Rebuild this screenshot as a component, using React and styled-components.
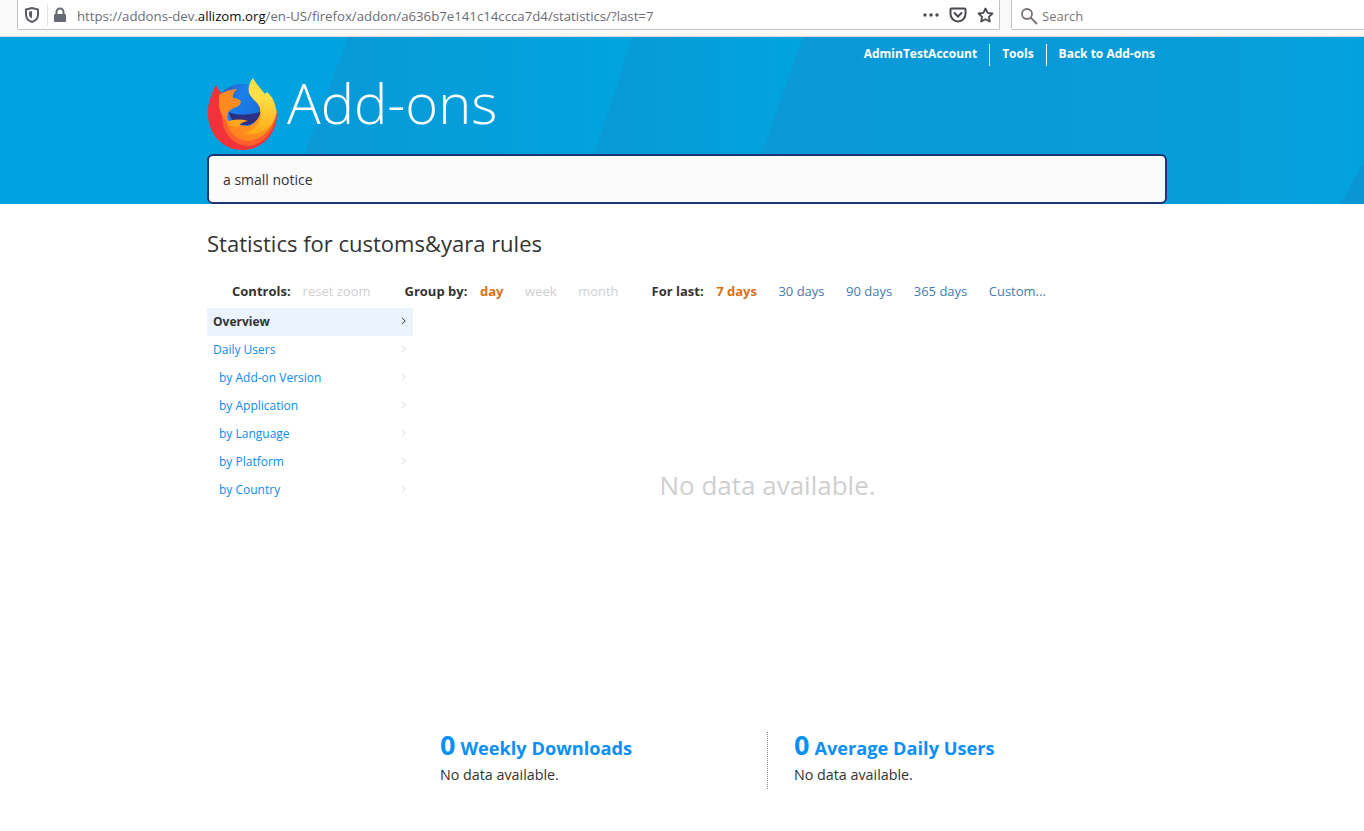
import React from 'react';
import styled, { createGlobalStyle } from 'styled-components';

const Global = createGlobalStyle`
  html, body { margin: 0; padding: 0; background: #fff; }
  body { font-family: "Open Sans", "Liberation Sans", sans-serif; overflow: hidden; }
  * { box-sizing: border-box; }
`;

const Page = styled.div`
  width: 1364px;
  height: 831px;
  overflow: hidden;
  display: flex;
  flex-direction: column;
`;

const Chrome = styled.div`
  height: 37px;
  flex: none;
  background: #f9f9fa;
  border-bottom: 1px solid #d4d4d4;
  padding-left: 17px;
  display: flex;
  gap: 11px;
  align-items: flex-start;
  overflow: hidden;
`;

const UrlBox = styled.div`
  width: 983px;
  height: 30px;
  flex: none;
  background: #fff;
  border: 1px solid #c4c4c4;
  border-top: none;
  border-radius: 0 0 2px 2px;
  display: flex;
  align-items: center;
  padding: 0 5px 0 6px;
  font-family: "Open Sans", sans-serif;
  font-size: 13.23px;
  color: #6c6c74;
`;

const Sep = styled.span`
  width: 1px;
  height: 22px;
  background: #e4e4e6;
  margin: 0 5px 0 7px;
`;

const UrlText = styled.span`
  margin-left: 10px;
  padding-top: 2px;
  flex: 1;
  white-space: nowrap;
  b { font-weight: 400; color: #0c0c0d; }
`;

const UrlActions = styled.div`
  display: flex;
  align-items: center;
  gap: 10px;
  color: #4a4a4f;
`;

const SearchBox = styled.div`
  width: 360px;
  height: 30px;
  flex: none;
  background: #fff;
  border: 1px solid #c4c4c4;
  border-top: none;
  border-radius: 0 0 2px 2px;
  display: flex;
  align-items: center;
  gap: 4px;
  padding: 2px 0 0 8px;
  font-size: 13px;
  color: #77777c;
`;

const Header = styled.header`
  position: relative;
  height: 167px;
  flex: none;
  background: #00a3df;
  overflow: hidden;
`;

const HeaderArt = styled.svg`
  position: absolute;
  inset: 0;
  width: 100%;
  height: 100%;
`;

const HeaderInner = styled.div`
  position: relative;
  width: 960px;
  height: 100%;
  margin-left: 207px;
  display: flex;
  flex-direction: column;
`;

const TopNav = styled.nav`
  display: flex;
  justify-content: flex-end;
  padding: 7px 12px 0 0;
  height: 29px;
`;

const TopLink = styled.a`
  font-size: 12px;
  font-weight: 700;
  line-height: 20px;
  color: #fff;
  padding: 0 12px;
  border-left: ${p => (p.$first ? 'none' : '1px solid #fff')};
  &:last-child { padding-right: 0; }
`;

const Brand = styled.div`
  display: flex;
  align-items: flex-start;
  height: 88px;
`;

const BrandLogo = styled.svg`
  width: 78px;
  height: 78px;
  margin: 8px 0 0 -3px;
  flex: none;
`;

const BrandName = styled.h1`
  margin: 0 0 0 5px;
  font-size: 56px;
  font-weight: 300;
  line-height: 72px;
  color: #fff;
`;

const Notice = styled.div`
  height: 50px;
  background: #fbfbfb;
  border: 2px solid #1d3572;
  border-radius: 6px;
  padding: 0 14px;
  display: flex;
  align-items: center;
  font-size: 14px;
  color: #333;
`;

const Main = styled.main`
  width: 960px;
  margin-left: 207px;
  flex: 1;
  display: flex;
  flex-direction: column;
`;

const Title = styled.h2`
  margin: 24px 0 0;
  font-size: 22px;
  font-weight: 400;
  line-height: 30px;
  color: #333;
`;

const Controls = styled.div`
  display: flex;
  align-items: center;
  height: 20px;
  margin-top: 23px;
  padding-left: 25px;
  font-size: 13px;
  white-space: nowrap;
`;

const Group = styled.div`
  display: flex;
  gap: ${p => p.$gap || 21}px;
  margin-right: ${p => p.$mr || 0}px;
  align-items: center;
`;

const CtlLabel = styled.strong`
  font-weight: 700;
  color: #333;
  margin-right: -9px;
`;

const Ctl = styled.a`
  color: ${p => (p.$state === 'active' ? '#d9701a' : p.$state === 'off' ? '#cfcfcf' : '#447bb4')};
  font-weight: ${p => (p.$state === 'active' ? 700 : 400)};
`;

const Columns = styled.div`
  display: grid;
  grid-template-columns: 206px 1fr;
  margin-top: 7px;
`;

const SideNav = styled.ul`
  list-style: none;
  margin: 0;
  padding: 0;
`;

const SideRow = styled.li`
  height: 28px;
  display: flex;
  align-items: center;
  justify-content: space-between;
  padding: 0 7px 2px ${p => (p.$sub ? 12 : 6)}px;
  font-size: 12px;
  font-weight: ${p => (p.$active ? 700 : 400)};
  color: ${p => (p.$active ? '#333' : '#0a8cf0')};
  background: ${p => (p.$active ? '#ebf3fd' : 'transparent')};
`;

const Chart = styled.div`
  height: 354px;
  display: flex;
  align-items: center;
  justify-content: center;
  padding: 0 45px 0 0;
  font-size: 26px;
  color: #cfcfcf;
`;

const Stats = styled.section`
  margin: 70px 0 0 233px;
  display: flex;
  height: 57px;
`;

const Stat = styled.div`
  width: ${p => p.$w}px;
  padding-left: ${p => p.$pl || 0}px;
  border-right: ${p => (p.$rule ? '1px dotted #888' : 'none')};
`;

const StatHead = styled.div`
  display: flex;
  align-items: baseline;
  gap: 5px;
  height: 30px;
  color: #0a90f5;
  font-weight: 700;
  font-size: 18.2px;
  line-height: 25px;
`;

const StatNum = styled.span`
  font-size: 27px;
  line-height: 25px;
`;

const StatNote = styled.div`
  font-size: 14.3px;
  line-height: 20px;
  margin-top: 3px;
  color: #333;
`;

const Chevron = ({ dark }) => (
  <svg width="5" height="8" viewBox="0 0 5 8" fill="none" stroke={dark ? '#333' : '#dcdcdc'} strokeWidth="1">
    <path d="M1 .8 4.200 4 1 7.200" />
  </svg>
);

const ShieldIcon = () => (
  <svg width="16" height="16" viewBox="0 0 16 16">
    <path d="M8 1 2 2.600v5.200C2 11.600 5 14 8 15c3-1 6-3.400 6-7.200V2.600z" fill="none" stroke="#5b5b66" strokeWidth="2" />
    <path d="M8 4 5 4.800v3c0 1.800 1.400 3 3 3.600z" fill="#5b5b66" />
  </svg>
);

const LockIcon = () => (
  <svg width="14" height="16" viewBox="0 0 14 16">
    <path d="M3.500 7V5a3.500 3.500 0 0 1 7 0v2" fill="none" stroke="#666a75" strokeWidth="2" />
    <rect x="1" y="7" width="12" height="8" rx="1" fill="#666a75" />
  </svg>
);

const PocketIcon = () => (
  <svg width="18" height="16" viewBox="0 0 18 16" fill="none" stroke="#4a4a4f" strokeWidth="2">
    <path d="M2.500 1.500h13a1 1 0 0 1 1 1V7a7.500 7.500 0 0 1-15 0V2.500a1 1 0 0 1 1-1z" />
    <path d="M5.500 6 9 9.500 12.500 6" strokeLinecap="round" />
  </svg>
);

const StarIcon = () => (
  <svg width="17" height="16" viewBox="0 0 17 16" fill="none" stroke="#4a4a4f" strokeWidth="1.800" strokeLinejoin="round">
    <path d="M8.500 1.500l2.100 4.400 4.800.6-3.500 3.300.9 4.700-4.300-2.300-4.300 2.300.9-4.700-3.500-3.300 4.800-.6z" />
  </svg>
);

const DotsIcon = () => (
  <svg width="16" height="4" viewBox="0 0 16 4" fill="#4a4a4f">
    <circle cx="2" cy="2" r="1.700" /><circle cx="8" cy="2" r="1.700" /><circle cx="14" cy="2" r="1.700" />
  </svg>
);

const SearchIcon = () => (
  <svg width="18" height="18" viewBox="0 0 18 18" fill="none" stroke="#7a7078" strokeWidth="1.800">
    <circle cx="7" cy="7" r="5" />
    <path d="M11 11l5.500 5.500" strokeLinecap="round" />
  </svg>
);

const FirefoxLogo = () => (
  <BrandLogo viewBox="0 0 78 78">
    <defs>
      <linearGradient id="ffOrange" x1="0" y1="1" x2="1" y2="0">
        <stop offset="0" stopColor="#ff7a1f" />
        <stop offset="1" stopColor="#ffb21a" />
      </linearGradient>
      <linearGradient id="ffTail" x1="0" y1="0" x2="0" y2="1">
        <stop offset="0.35" stopColor="#ffdf45" />
        <stop offset="1" stopColor="#ffa915" />
      </linearGradient>
      <linearGradient id="ffGlobe" x1="0" y1="0" x2="1" y2="0.6">
        <stop offset="0" stopColor="#2f56c4" />
        <stop offset="0.5" stopColor="#1a80ea" />
        <stop offset="1" stopColor="#1a70dc" />
      </linearGradient>
    </defs>
    <path d="M12 11 C6 22 3 33 4 43 C6 63 21 76 38 76 C58 76 73 60 73 40 L50 22 L22 22 C18 20 15 17 12 11 Z" fill="#f1323a" />
    <path d="M18 40 C17 56 28 72 44 72 C59 71 71 58 73 38 L55 30 L30 28 Z" fill="#ff5f2b" />
    <path d="M22 46 C24 58 33 67 44 67 C58 66 70 54 73 36 L55 30 L30 34 Z" fill="url(#ffOrange)" />
    <path d="M16 22 C20 14 31 9 42 10 C50 11 55 21 56 32 C57 42 52 50 44 52 L26 50 L20 36 Z" fill="url(#ffGlobe)" />
    <path d="M25 38 C33 42 45 41 56.500 38 C55 46 49 51 40 51 C32 51 26 46 25 38 Z" fill="#2c2f83" />
    <path d="M15 21 C21 17 27 15 33 15 C30 18 28 21 29 24 C32 24 37 26 37 28 C36 31 34 33 32 33 C28 35 25 36 24 39 C23 43 23 46 24 49 C19 45 16 38 15 32 Z" fill="#ff8a1f" />
    <path d="M23 48 C30 45 37 45 44 47 C38 48 36 50 34 53 C30 53 26 51 23 48 Z" fill="#ffa61d" />
    <path d="M49 4 C45 9 44 14 45 19 C48 26 56 29 57 38 C58 49 50 57 39 59 C53 63 66 56 71 44 C74 34 70 24 63 18 L61 20 C57 15 52 10 49 4 Z" fill="url(#ffTail)" />
  </BrandLogo>
);

const sections = [
  { label: 'Overview', active: true },
  { label: 'Daily Users' },
  { label: 'by Add-on Version', sub: true },
  { label: 'by Application', sub: true },
  { label: 'by Language', sub: true },
  { label: 'by Platform', sub: true },
  { label: 'by Country', sub: true },
];

export default function App() {
  return (
    <Page>
      <Global />
      <Chrome>
        <UrlBox>
          <ShieldIcon />
          <Sep />
          <LockIcon />
          <UrlText>
            https://addons-dev.<b>allizom.org</b>/en-US/firefox/addon/a636b7e141c14ccca7d4/statistics/?last=7
          </UrlText>
          <UrlActions>
            <DotsIcon />
            <PocketIcon />
            <StarIcon />
          </UrlActions>
        </UrlBox>
        <SearchBox>
          <SearchIcon />
          Search
        </SearchBox>
      </Chrome>
      <Header>
        <HeaderArt viewBox="0 0 1364 167" preserveAspectRatio="none">
          <defs>
            <linearGradient id="band" x1="0" y1="0" x2="1" y2="0">
              <stop offset="0" stopColor="#0a98d6" />
              <stop offset="1" stopColor="#00a4df" />
            </linearGradient>
            <linearGradient id="bandWide" x1="0" y1="0" x2="1" y2="0">
              <stop offset="0" stopColor="#0a99d7" />
              <stop offset="0.7" stopColor="#089cd9" />
              <stop offset="1" stopColor="#03a2de" />
            </linearGradient>
          </defs>
          <polygon points="348,0 632,0 578,167 286,167" fill="url(#band)" />
          <polygon points="632,0 803,0 743,167 578,167" fill="url(#band)" />
          <polygon points="803,0 1364,0 1364,167 743,167" fill="url(#bandWide)" />
          <polygon points="1364,125 1364,167 1340,167" fill="#0a96d4" />
        </HeaderArt>
        <HeaderInner>
          <TopNav>
            <TopLink $first>AdminTestAccount</TopLink>
            <TopLink>Tools</TopLink>
            <TopLink>Back to Add-ons</TopLink>
          </TopNav>
          <Brand>
            <FirefoxLogo />
            <BrandName>Add-ons</BrandName>
          </Brand>
          <Notice>a small notice</Notice>
        </HeaderInner>
      </Header>
      <Main>
        <Title>Statistics for customs&amp;yara rules</Title>
        <Controls>
          <Group $mr={34}>
            <CtlLabel>Controls:</CtlLabel>
            <Ctl $state="off">reset zoom</Ctl>
          </Group>
          <Group $gap={21.6} $mr={33}>
            <CtlLabel>Group by:</CtlLabel>
            <Ctl $state="active">day</Ctl>
            <Ctl $state="off">week</Ctl>
            <Ctl $state="off">month</Ctl>
          </Group>
          <Group $gap={21.5}>
            <CtlLabel>For last:</CtlLabel>
            <Ctl $state="active">7 days</Ctl>
            <Ctl>30 days</Ctl>
            <Ctl>90 days</Ctl>
            <Ctl>365 days</Ctl>
            <Ctl>Custom...</Ctl>
          </Group>
        </Controls>
        <Columns>
          <SideNav>
            {sections.map(s => (
              <SideRow key={s.label} $sub={s.sub} $active={s.active}>
                {s.label}
                <Chevron dark={s.active} />
              </SideRow>
            ))}
          </SideNav>
          <Chart>No data available.</Chart>
        </Columns>
        <Stats>
          <Stat $w={328} $rule>
            <StatHead><StatNum>0</StatNum>Weekly Downloads</StatHead>
            <StatNote>No data available.</StatNote>
          </Stat>
          <Stat $w={300} $pl={26}>
            <StatHead><StatNum>0</StatNum>Average Daily Users</StatHead>
            <StatNote>No data available.</StatNote>
          </Stat>
        </Stats>
      </Main>
    </Page>
  );
}
